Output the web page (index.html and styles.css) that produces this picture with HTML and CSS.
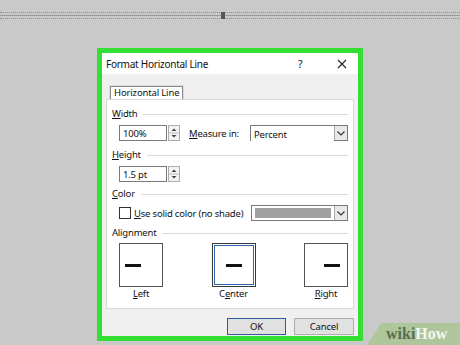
FILE: index.html
```html
<!DOCTYPE html>
<html>
<head>
<meta charset="utf-8">
<link rel="stylesheet" href="styles.css">
</head>
<body>
<div class="screen">
  <div class="rule"><span class="handle"></span></div>
  <div class="dialog">
    <div class="titlebar">
      <span class="title">Format Horizontal Line</span>
      <span class="help">?</span>
      <span class="close"><svg width="10" height="10" viewBox="0 0 10 10"><path d="M1 1L9 9M9 1L1 9" stroke="#222" stroke-width="1.1" fill="none"/></svg></span>
    </div>
    <div class="body">
      <div class="tabs"><div class="tab">Horizontal Line</div></div>
      <div class="panel">
        <div class="group-label"><span><u>W</u>idth</span><i class="sep"></i></div>
        <div class="row">
          <div class="spin">
            <span class="field">100%</span>
            <span class="spinbtn"><svg width="12" height="16" viewBox="0 0 12 16"><path d="M3.5 6L6 3.5L8.5 6Z M3.5 10L6 12.5L8.5 10Z" fill="#444"/><path d="M1 8H11" stroke="#bdbdbd" stroke-width="1"/></svg></span>
          </div>
          <span class="mlabel"><u>M</u>easure in:</span>
          <div class="select">
            <span class="field">Percent</span>
            <span class="drop"><svg width="8" height="5" viewBox="0 0 8 5"><path d="M0.5 0.5L4 4L7.5 0.5" stroke="#333" stroke-width="1.1" fill="none"/></svg></span>
          </div>
        </div>
        <div class="group-label gl-height"><span><u>H</u>eight</span><i class="sep"></i></div>
        <div class="row">
          <div class="spin">
            <span class="field">1.5 pt</span>
            <span class="spinbtn"><svg width="12" height="16" viewBox="0 0 12 16"><path d="M3.5 6L6 3.5L8.5 6Z M3.5 10L6 12.5L8.5 10Z" fill="#444"/><path d="M1 8H11" stroke="#bdbdbd" stroke-width="1"/></svg></span>
          </div>
        </div>
        <div class="group-label gl-color"><span><u>C</u>olor</span><i class="sep"></i></div>
        <div class="row">
          <span class="check"></span>
          <span class="clabel"><u>U</u>se solid color (no shade)</span>
          <div class="select color-select">
            <span class="swatch"></span>
            <span class="drop"><svg width="8" height="5" viewBox="0 0 8 5"><path d="M0.5 0.5L4 4L7.5 0.5" stroke="#333" stroke-width="1.1" fill="none"/></svg></span>
          </div>
        </div>
        <div class="group-label gl-color"><span>Alignment</span><i class="sep"></i></div>
        <div class="align-row">
          <div class="align-item">
            <div class="abox abox-left"><i class="dash"></i></div>
            <span class="alabel"><u>L</u>eft</span>
          </div>
          <div class="align-item">
            <div class="abox abox-center selected"><i class="dash"></i></div>
            <span class="alabel">C<u>e</u>nter</span>
          </div>
          <div class="align-item">
            <div class="abox abox-right"><i class="dash"></i></div>
            <span class="alabel"><u>R</u>ight</span>
          </div>
        </div>
      </div>
      <div class="buttons">
        <span class="btn btn-ok">OK</span>
        <span class="btn">Cancel</span>
      </div>
    </div>
  </div>
  <div class="wikihow"><span class="wh-bg"></span><span class="wh-text"><b class="wiki">wiki</b><b class="how">How</b></span></div>
</div>
</body>
</html>
```

FILE: styles.css
```css
* { box-sizing: border-box; }
html, body { margin: 0; padding: 0; }
body {
  width: 460px;
  height: 345px;
  overflow: hidden;
  background: #c9c9c9;
  font-family: "Noto Sans", "Open Sans", sans-serif;
  color: #111;
}
.screen {
  position: relative;
  width: 460px;
  height: 345px;
  padding-top: 12px;
}
.rule {
  position: relative;
  height: 7px;
  border-top: 1px dotted #8c8c8c;
  border-bottom: 1px dotted #8c8c8c;
  background: linear-gradient(#c9c9c9 0 2px, #9a9a9a 2px 3px, #c9c9c9 3px);
}
.handle {
  position: absolute;
  left: 221px;
  top: -1px;
  width: 4px;
  height: 7px;
  background: #555;
}
.dialog {
  margin: 29px 0 0 97px;
  width: 266px;
  height: 293px;
  border: 5px solid #34df34;
  background: #f0f0f0;
  display: flex;
  flex-direction: column;
}
.titlebar {
  height: 21px;
  background: #ffffff;
  display: flex;
  align-items: center;
  padding-left: 4px;
  font-size: 10px;
  letter-spacing: -0.25px;
}
.title { flex: 1; }
.help { width: 8px; margin-right: 31px; font-size: 10.5px; }
.close { width: 10px; height: 10px; margin-right: 11px; display: flex; }
.body {
  flex: 1;
  display: flex;
  flex-direction: column;
  padding: 11px 4px 0 4px;
}
.tabs { display: flex; padding-left: 4px; }
.tab {
  height: 13px;
  padding: 0 3px;
  border: 1px solid #8a8a8a;
  border-bottom: none;
  background: #fff;
  font-size: 9.5px;
  line-height: 12px;
  letter-spacing: -0.15px;
  box-shadow: 0 0 0 1px #dcdcdc;
  margin-top: 1px;
}
.panel {
  height: 210px;
  border: 1px solid #d9d9d9;
  background: #fff;
  padding: 0 5px 0 5px;
  display: flex;
  flex-direction: column;
  font-size: 9.5px;
  letter-spacing: -0.2px;
}
.group-label {
  display: flex;
  align-items: center;
  height: 12px;
  line-height: 12px;
  margin-top: 8px;
}
.gl-height { margin-top: 8px; }
.gl-color { margin-top: 6px; }
.sep {
  flex: 1;
  height: 1px;
  background: #dadada;
  margin-left: 6px;
}
.row {
  display: flex;
  align-items: center;
  height: 16px;
  margin-top: 5px;
  margin-left: 7px;
}
.spin { display: flex; height: 16px; gap: 1px; }
.field {
  display: flex;
  align-items: center;
  height: 16px;
  padding-left: 3px;
  border: 1px solid #7a7a7a;
  background: #fff;
}
.spin .field { width: 48px; }
.spinbtn {
  width: 12px;
  height: 16px;
  border: 1px solid #adadad;
  background: #f3f3f3;
  display: flex;
}
.spinbtn svg { margin: -1px; }
.mlabel { margin-left: 9px; }
.select {
  margin-left: auto;
  width: 98px;
  height: 16px;
  display: flex;
  border: 1px solid #7a7a7a;
  background: #fff;
}
.select .field { flex: 1; border: none; }
.drop {
  width: 13px;
  border-left: 1px solid #ababab;
  background: #e8e8e8;
  display: flex;
  align-items: center;
  justify-content: center;
}
.check {
  width: 12px;
  height: 12px;
  border: 1px solid #333;
  background: #fff;
}
.clabel { margin-left: 3px; }
.color-select { width: 97px; padding: 2px 0 2px 3px; }
.swatch { flex: 1; background: #a0a0a0; margin-right: 3px; }
.color-select .drop { margin: -2px 0; }
.align-row {
  display: flex;
  justify-content: space-between;
  margin: 4px 0 0 7px;
}
.align-item {
  display: flex;
  flex-direction: column;
  align-items: center;
  width: 44px;
}
.abox {
  width: 44px;
  height: 44px;
  border: 1px solid #555;
  background: #fff;
  display: flex;
  align-items: center;
}
.abox-left { justify-content: flex-start; padding-left: 5px; }
.abox-center { justify-content: center; }
.abox-right { justify-content: flex-end; padding-right: 7px; }
.abox.selected {
  border-color: #3a3a3a;
  box-shadow: inset 0 0 0 1px #fff, inset 0 0 0 2px #2f66b0;
}
.dash {
  width: 16px;
  height: 3px;
  background: #111;
}
.alabel {
  height: 12px;
  line-height: 12px;
  margin-top: 1px;
}
.buttons {
  display: flex;
  justify-content: flex-end;
  gap: 8px;
  margin-top: 9px;
}
.btn {
  width: 60px;
  height: 17px;
  border: 1px solid #adadad;
  background: #e1e1e1;
  display: flex;
  align-items: center;
  justify-content: center;
  font-size: 9.5px;
  letter-spacing: -0.2px;
}
.btn-ok { width: 59px; border-color: #2b5aa0; }
.wikihow {
  position: absolute;
  left: 367px;
  top: 323px;
  width: 93px;
  height: 22px;
}
.wh-bg {
  position: absolute;
  inset: 0;
  background: #afc69c;
  clip-path: polygon(14px 0, 100% 0, 100% 100%, 0 100%);
}
.wh-text {
  position: absolute;
  left: 19px;
  top: 2px;
  font-family: "Liberation Serif", "DejaVu Serif", serif;
  font-size: 16px;
  line-height: 18px;
}
.wiki { color: #5a6d4c; }
.how { color: #f4f7f0; }
```
